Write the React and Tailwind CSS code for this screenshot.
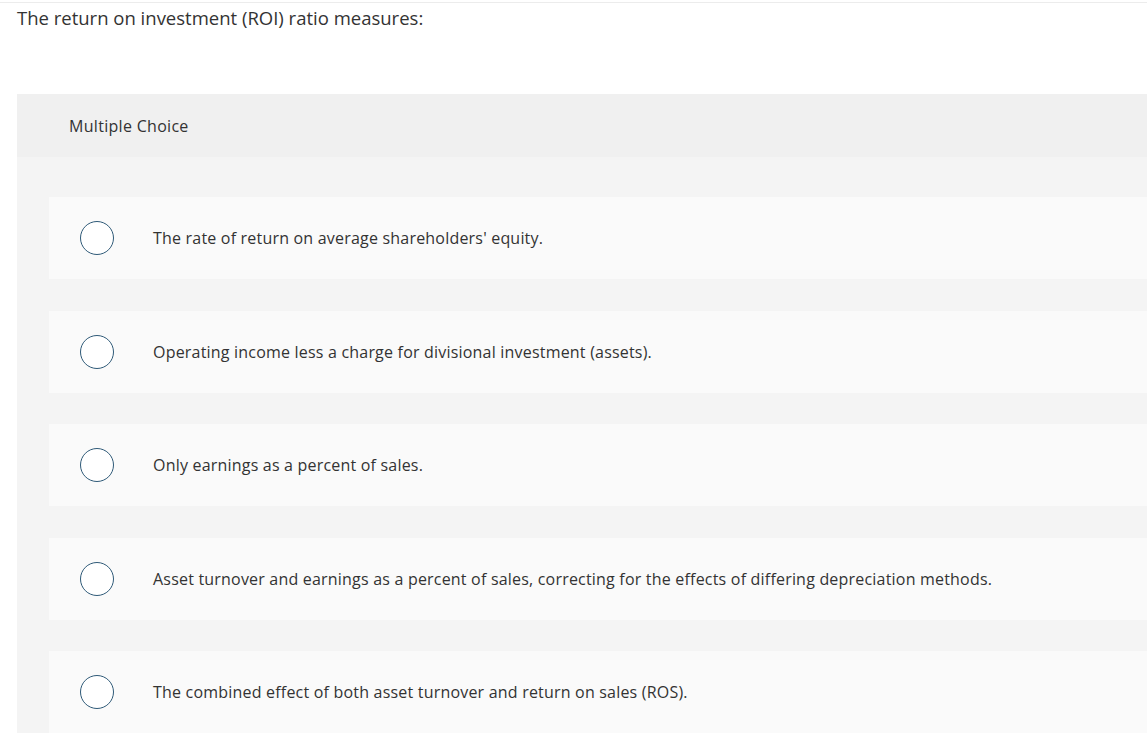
const OPCIONES = [
  "The rate of return on average shareholders' equity.",
  "Operating income less a charge for divisional investment (assets).",
  "Only earnings as a percent of sales.",
  "Asset turnover and earnings as a percent of sales, correcting for the effects of differing depreciation methods.",
  "The combined effect of both asset turnover and return on sales (ROS).",
];

export default function App() {
  return (
    <div className="min-h-screen bg-white overflow-hidden" style={{ fontFamily: "'Open Sans', 'Liberation Sans', sans-serif" }}>
      <div className="h-[3px] border-b border-[#ececec]" />

      <h1 className="pl-[17px] pt-[1px] text-[18.5px] leading-[28px] text-[#333]">
        The return on investment (ROI) ratio measures:
      </h1>

      {/* Panel */}
      <div className="ml-[17px] mt-[62px] bg-[#f4f4f4]">
        <div className="h-[63px] bg-[#f0f0f0] pl-[52px] flex items-center text-[16px] tracking-[0.3px] text-[#333]">
          Multiple Choice
        </div>

        <div className="pt-[40px] pl-[32px] flex flex-col gap-[31.5px]">
          {OPCIONES.map((texto) => (
            <label
              key={texto}
              className="h-[82px] bg-[#fafafa] flex items-center cursor-pointer"
            >
              <span className="ml-[31px] w-[34px] h-[34px] rounded-full border-[1.5px] border-[#2f5a78] bg-white shrink-0" />
              <span className="ml-[39px] text-[16px] tracking-[0.2px] text-[#333]">{texto}</span>
            </label>
          ))}
        </div>
      </div>
    </div>
  );
}
